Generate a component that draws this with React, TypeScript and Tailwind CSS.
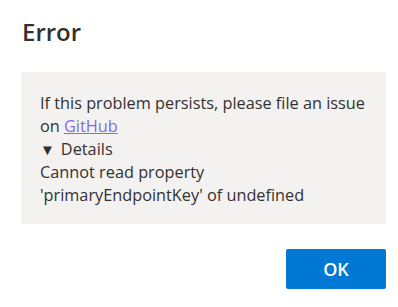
export default function App() {
  return (
    <div
      className="w-[398px] h-[307px] bg-white text-[#323130]"
      style={{ fontFamily: '"Open Sans", "Noto Sans", sans-serif' }}
    >
      <div className="ml-[21px] w-[365px] pt-[16px]">
        <h1 className="text-[24px] leading-[32px] font-semibold pl-[1px]">Error</h1>

        <div className="mt-[24px] h-[152px] bg-[#f3f2f1] px-[19px] pt-[20px] text-[16.3px] leading-[23px]">
          <p>
            If this problem persists, please file an issue
            <br />
            on{' '}
            <a href="#" className="text-[#7e6ee6] underline">
              GitHub
            </a>
          </p>
          <div className="flex items-center gap-[6px]">
            <span className="text-[15px] leading-[23px]">▼</span>
            <span>Details</span>
          </div>
          <p>
            Cannot read property
            <br />
            'primaryEndpointKey' of undefined
          </p>
        </div>

        <div className="mt-[25px] flex justify-end">
          <button className="h-[40px] w-[100px] rounded-[2px] bg-[#0078d4] text-white text-[18px] font-semibold">
            OK
          </button>
        </div>
      </div>
    </div>
  );
}
